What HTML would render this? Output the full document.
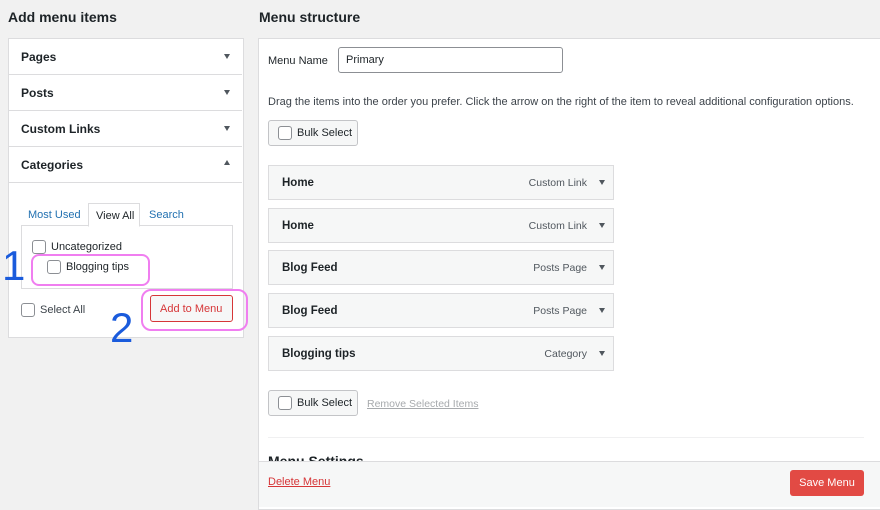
<!DOCTYPE html><html><head><style>
body{margin:0;width:880px;height:500px;background:#f1f1f1;font-family:"Liberation Sans",sans-serif;font-size:12px;color:#1d2327;position:relative;overflow:hidden}
.a{position:absolute}
h2{position:absolute;margin:0;font-size:14px;font-weight:bold;color:#1d2327}
.box{background:#fff;border:1px solid #dcdcde}
.row{position:absolute;left:0;width:233px;height:35px;border-bottom:1px solid #dcdcde;font-weight:bold;font-size:12px}
.row span{position:absolute;left:12px;top:11px}
.tri{position:absolute;right:12px;top:15px;width:0;height:0;border-left:3.5px solid transparent;border-right:3.5px solid transparent;border-top:5px solid #50575e}
.up{border-top:0;border-bottom:5px solid #50575e;top:13px}
.cb{position:absolute;width:12px;height:12px;border:1px solid #8c8f94;border-radius:3px;background:#fff}
.item{position:absolute;left:268px;width:344px;height:33px;background:#f6f7f7;border:1px solid #dcdcde}
.item b{position:absolute;left:13px;top:11px;font-size:11.5px}
.item i{position:absolute;right:26px;top:11px;font-style:normal;font-size:10.5px;color:#50575e}
.item .tri{right:8px;top:14px}
.btn{position:absolute;background:#f6f7f7;border:1px solid #c3c4c7;border-radius:3px}
</style></head><body>
<h2 style="left:8px;top:9px">Add menu items</h2>
<h2 style="left:259px;top:9px">Menu structure</h2>
<div class="a box" style="left:8px;top:38px;width:234px;height:298px">
<div class="row" style="top:0"><span>Pages</span><div class="tri"></div></div>
<div class="row" style="top:36px"><span>Posts</span><div class="tri"></div></div>
<div class="row" style="top:72px"><span>Custom Links</span><div class="tri"></div></div>
<div class="row" style="top:108px"><span>Categories</span><div class="tri up"></div></div>
<div class="a" style="left:19px;top:170px;font-size:11px;color:#2271b1">Most Used</div>
<div class="a" style="left:79px;top:164px;width:50px;height:22px;border:1px solid #dcdcde;border-bottom:1px solid #fff;background:#fff;z-index:2"><span class="a" style="left:7px;top:6px;font-size:11px">View All</span></div>
<div class="a" style="left:140px;top:170px;font-size:11px;color:#2271b1">Search</div>
<div class="a" style="left:12px;top:186px;width:210px;height:62px;border:1px solid #dcdcde"></div>
<div class="cb" style="left:23px;top:201px"></div><div class="a" style="left:42px;top:202px;font-size:11px">Uncategorized</div>
<div class="cb" style="left:38px;top:221px"></div><div class="a" style="left:57px;top:222px;font-size:11px">Blogging tips</div>
<div class="a" style="left:22px;top:215px;width:115px;height:28px;border:2px solid #f07ef0;border-radius:8px"></div>
<div class="cb" style="left:12px;top:264px"></div><div class="a" style="left:31px;top:265px;font-size:11px;color:#3c434a">Select All</div>
<div class="btn" style="left:141px;top:256px;width:81px;height:25px;border-color:#d63638"><span class="a" style="left:9px;top:7px;font-size:11px;color:#d63638">Add to Menu</span></div>
<div class="a" style="left:132px;top:250px;width:103px;height:38px;border:2px solid #f07ef0;border-radius:10px"></div>
</div>
<div class="a" style="left:2px;top:245px;font-size:42px;color:#1a5bdc;line-height:1">1</div>
<div class="a" style="left:110px;top:307px;font-size:42px;color:#1a5bdc;line-height:1">2</div>
<div class="a box" style="left:258px;top:38px;width:630px;height:470px"></div>
<div class="a" style="left:268px;top:55px;font-size:11px">Menu Name</div>
<div class="a" style="left:338px;top:47px;width:223px;height:24px;border:1px solid #8c8f94;border-radius:3px;background:#fff"><span class="a" style="left:7px;top:6px;font-size:11px">Primary</span></div>
<div class="a" style="left:268px;top:96px;font-size:11px;color:#3c434a">Drag the items into the order you prefer. Click the arrow on the right of the item to reveal additional configuration options.</div>
<div class="btn" style="left:268px;top:120px;width:88px;height:24px"><div class="cb" style="left:9px;top:5px"></div><span class="a" style="left:28px;top:6px;font-size:11px">Bulk Select</span></div>
<div class="item" style="top:165px"><b>Home</b><i>Custom Link</i><div class="tri"></div></div>
<div class="item" style="top:208px"><b>Home</b><i>Custom Link</i><div class="tri"></div></div>
<div class="item" style="top:250px"><b>Blog Feed</b><i>Posts Page</i><div class="tri"></div></div>
<div class="item" style="top:293px"><b>Blog Feed</b><i>Posts Page</i><div class="tri"></div></div>
<div class="item" style="top:336px"><b>Blogging tips</b><i>Category</i><div class="tri"></div></div>
<div class="btn" style="left:268px;top:390px;width:88px;height:24px"><div class="cb" style="left:9px;top:5px"></div><span class="a" style="left:28px;top:6px;font-size:11px">Bulk Select</span></div>
<div class="a" style="left:367px;top:398px;font-size:10.5px;color:#a7aaad;text-decoration:underline">Remove Selected Items</div>
<div class="a" style="left:268px;top:437px;width:596px;border-top:1px solid #f0f0f1"></div>
<div class="a" style="left:268px;top:453px;font-size:14px;font-weight:bold">Menu Settings</div>
<div class="a" style="left:259px;top:461px;width:630px;height:45px;background:#f6f7f7;border-top:1px solid #dcdcde"></div>
<div class="a" style="left:268px;top:476px;font-size:11px;color:#d63638;text-decoration:underline">Delete Menu</div>
<div class="a" style="left:790px;top:470px;width:74px;height:26px;background:#e24a44;border-radius:3px;color:#fff;font-size:11px;text-align:center;line-height:26px">Save Menu</div>
</body></html>
